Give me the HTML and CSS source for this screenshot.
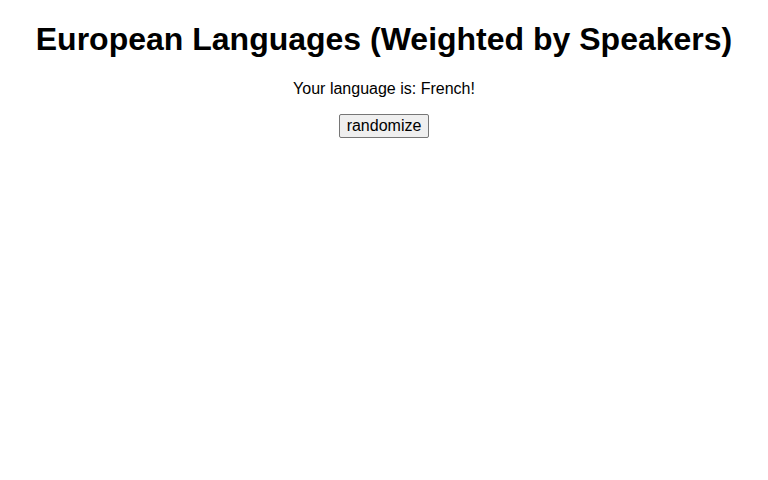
FILE: index.html
```html
<!DOCTYPE html>
<html lang="en">
<head>
<meta charset="UTF-8">
<title>European Languages</title>
<link rel="stylesheet" href="styles.css">
</head>
<body>
  <h1 class="title">European Languages (Weighted by Speakers)</h1>
  <p class="result">Your language is: <span id="lang">French</span>!</p>
  <p class="actions">
    <button class="btn" onclick="randomize()">randomize</button>
  </p>

<script>
  // rough speaker counts, in millions
  const languages = [
    ['Russian', 106], ['German', 95], ['French', 80], ['English', 70],
    ['Italian', 65], ['Spanish', 47], ['Polish', 40], ['Ukrainian', 33],
    ['Romanian', 24], ['Dutch', 23], ['Greek', 13], ['Hungarian', 13],
    ['Portuguese', 10], ['Czech', 10], ['Swedish', 10]
  ];

  function randomize() {
    const total = languages.reduce((s, l) => s + l[1], 0);
    let r = Math.random() * total;
    for (const [name, n] of languages) {
      r -= n;
      if (r <= 0) {
        document.getElementById('lang').textContent = name;
        return;
      }
    }
  }
</script>
</body>
</html>
```

FILE: styles.css
```css
body {
  margin: 0 8px 8px;
  font-family: 'Liberation Sans', Arial, sans-serif;
  text-align: center;
  color: #000;
  background: #fff;
}
.title {
  font-size: 32px;
  font-weight: 700;
  margin: 21.44px 0;
}
.result { margin: 16px 0; font-size: 16px; }
.actions { margin: 16px 0; }
.btn {
  font-family: 'Liberation Sans', Arial, sans-serif;
  font-size: 16px;
  color: #000;
  background: #efefef;
  border: 1px solid #767676;
  border-radius: 2px;
  padding: 2px 7px;
  cursor: pointer;
}
.btn:hover { background: #e5e5e5; }
```
